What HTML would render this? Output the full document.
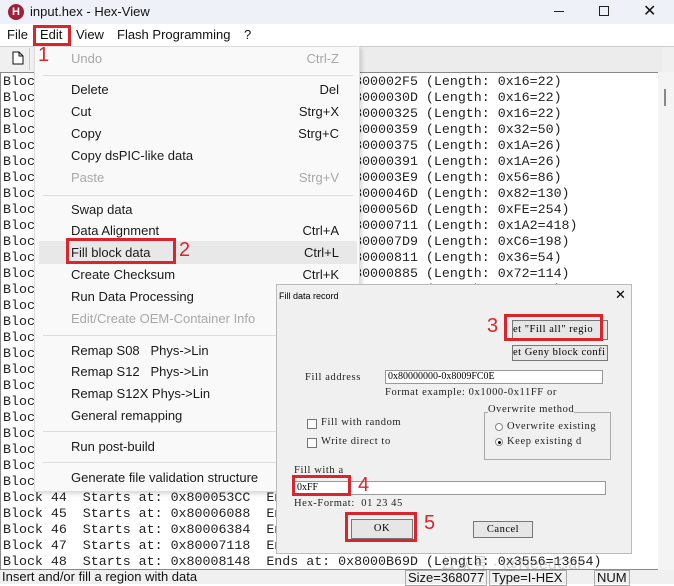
<!DOCTYPE html>
<html><head><meta charset="utf-8"><style>
*{margin:0;padding:0;box-sizing:border-box}
body{width:674px;height:584px;overflow:hidden;position:relative;background:#fff;font-family:"Liberation Sans","Noto Sans CJK SC",sans-serif;}
.abs{position:absolute}
.title{left:0;top:0;width:674px;height:24px;background:#eef2f8;font-size:13px;color:#111}
.menubar{left:0;top:24px;width:674px;height:22px;background:#fff;font-size:13px;color:#111}
.menubar span{position:absolute;top:3px}
.tool{left:0;top:46px;width:674px;height:26px;background:#f0f0f0;border-top:1px solid #ccc}
.txt{left:0;top:72px;width:660px;height:498px;background:#fff;border:1px solid #888;border-right:none;font-family:"Liberation Mono",monospace;font-size:13.3px;color:#222;white-space:pre;line-height:16px;padding-left:2px;padding-top:1px}
.sb{left:658px;top:72px;width:16px;height:498px;background:#f4f4f4}
.status{left:0;top:570px;width:674px;height:14px;background:#f0f0f0;font-size:13px;line-height:14px;color:#111}
.menu{left:34px;top:46px;width:326px;height:446px;background:#f9f9f9;border:1px solid #ddd;box-shadow:2px 2px 4px rgba(0,0,0,.15);font-size:13px;color:#1a1a1a}
.mi{position:absolute;left:36px;width:280px}
.mi b{font-weight:normal;position:absolute;right:12px}
.dis{color:#a8a8a8}
.sep{position:absolute;left:8px;width:310px;height:1px;background:#ddd}
.red{position:absolute;border:3px solid #d9262c}
.num{position:absolute;color:#d9262c;font-size:20px}
.dlg{left:276px;top:284px;width:356px;height:270px;background:#f0f0f0;border:1px solid #bbb}
.dlg .t{font-size:9px;position:absolute;left:2px;top:6px}
.dt{font-family:"Liberation Serif",serif;font-size:10.5px;letter-spacing:.6px;position:absolute;color:#222;white-space:pre}
.inp{position:absolute;background:#fff;border:1px solid #999;font-family:"Liberation Serif",serif;font-size:10px;padding-left:2px;line-height:12px}
.btn{position:absolute;background:#e6e6e6;border:1px solid #777;font-family:"Liberation Serif",serif;font-size:10.5px;letter-spacing:.5px;text-align:center;overflow:hidden;white-space:nowrap}
.cb{position:absolute;width:10px;height:10px;border:1px solid #777;background:#fff}
</style></head><body>
<div class="abs title">
 <div class="abs" style="left:8px;top:4px;width:16px;height:16px;border-radius:50%;background:#a0203a;color:#fff;font-size:11px;font-weight:bold;text-align:center;line-height:16px">H</div>
 <div class="abs" style="left:30px;top:4px">input.hex - Hex-View</div>
 <div class="abs" style="left:554px;top:11px;width:10px;height:1px;background:#222"></div>
 <div class="abs" style="left:599px;top:6px;width:10px;height:10px;border:1px solid #222"></div>
 <div class="abs" style="left:643px;top:1px;font-size:16px">✕</div>
</div>
<div class="abs menubar">
 <span style="left:7px">File</span><span style="left:40px">Edit</span><span style="left:76px">View</span><span style="left:117px">Flash Programming</span><span style="left:244px">?</span>
</div>
<div class="red" style="left:33px;top:25px;width:38px;height:21px"></div>
<div class="abs tool">
 <div class="abs" style="left:4px;top:1px;width:26px;height:22px;border-right:1px solid #ccc"></div>
 <svg class="abs" style="left:12px;top:4px" width="12" height="14"><path d="M1 1H7L11 5V13H1Z M7 1V5H11" fill="#fff" stroke="#111"/></svg>
 <div class="abs" style="left:360px;top:0;width:302px;height:25px;background:#ececec"></div>
</div>
<div class="abs txt">Block  1  Starts at: 0x800002DF  Ends at: 0x800002F5 (Length: 0x16=22)
Block  2  Starts at: 0x800002F7  Ends at: 0x8000030D (Length: 0x16=22)
Block  3  Starts at: 0x8000030F  Ends at: 0x80000325 (Length: 0x16=22)
Block  4  Starts at: 0x80000327  Ends at: 0x80000359 (Length: 0x32=50)
Block  5  Starts at: 0x8000035B  Ends at: 0x80000375 (Length: 0x1A=26)
Block  6  Starts at: 0x80000377  Ends at: 0x80000391 (Length: 0x1A=26)
Block  7  Starts at: 0x80000393  Ends at: 0x800003E9 (Length: 0x56=86)
Block  8  Starts at: 0x800003EB  Ends at: 0x8000046D (Length: 0x82=130)
Block  9  Starts at: 0x8000046F  Ends at: 0x8000056D (Length: 0xFE=254)
Block 10  Starts at: 0x8000056F  Ends at: 0x80000711 (Length: 0x1A2=418)
Block 11  Starts at: 0x80000713  Ends at: 0x800007D9 (Length: 0xC6=198)
Block 12  Starts at: 0x800007DB  Ends at: 0x80000811 (Length: 0x36=54)
Block 13  Starts at: 0x80000813  Ends at: 0x80000885 (Length: 0x72=114)
Block 14  Starts at: 0x80000887  Ends at: 0x800008D1 (Length: 0x4A=74)
Block 15
Block 16
Block 17
Block 18
Block 19
Block 20
Block 21
Block 22
Block 23
Block 24
Block 25
Block 43
Block 44  Starts at: 0x800053CC  Ends at: 0x80005E88
Block 45  Starts at: 0x80006088  Ends at: 0x80006380
Block 46  Starts at: 0x80006384  Ends at: 0x80007110
Block 47  Starts at: 0x80007118  Ends at: 0x80008140
Block 48  Starts at: 0x80008148  Ends at: 0x8000B69D (Length: 0x3556=13654)</div>
<div class="abs sb"><div class="abs" style="left:6px;top:17px;width:2px;height:17px;background:#888"></div></div>
<div class="abs status">
 <span class="abs" style="left:2px;top:0">Insert and/or fill a region with data</span>
 <span class="abs" style="left:405px;top:0;border:1px solid #aaa;padding:0 2px">Size=368077</span>
 <span class="abs" style="left:489px;top:0;border:1px solid #aaa;padding:0 2px;width:78px">Type=I-HEX</span>
 <span class="abs" style="left:594px;top:0;border:1px solid #aaa;padding:0 2px">NUM</span>
</div>
<div class="abs menu">
 <div class="mi dis" style="top:4px">Undo<b>Ctrl-Z</b></div>
 <div class="sep" style="top:28px"></div>
 <div class="mi" style="top:35px">Delete<b>Del</b></div>
 <div class="mi" style="top:57px">Cut<b>Strg+X</b></div>
 <div class="mi" style="top:79px">Copy<b>Strg+C</b></div>
 <div class="mi" style="top:101px">Copy dsPIC-like data</div>
 <div class="mi dis" style="top:123px">Paste<b>Strg+V</b></div>
 <div class="sep" style="top:148px"></div>
 <div class="mi" style="top:155px">Swap data</div>
 <div class="mi" style="top:176px">Data Alignment<b>Ctrl+A</b></div>
 <div class="abs" style="left:4px;top:194px;width:318px;height:23px;background:#e8e8e8"></div>
 <div class="mi" style="top:198px">Fill block data<b>Ctrl+L</b></div>
 <div class="mi" style="top:220px">Create Checksum<b>Ctrl+K</b></div>
 <div class="mi" style="top:242px">Run Data Processing</div>
 <div class="mi dis" style="top:264px">Edit/Create OEM-Container Info</div>
 <div class="sep" style="top:288px"></div>
 <div class="mi" style="top:296px">Remap S08&nbsp;&nbsp;&nbsp;Phys-&gt;Lin</div>
 <div class="mi" style="top:317px">Remap S12&nbsp;&nbsp;&nbsp;Phys-&gt;Lin</div>
 <div class="mi" style="top:339px">Remap S12X Phys-&gt;Lin</div>
 <div class="mi" style="top:361px">General remapping</div>
 <div class="sep" style="top:384px"></div>
 <div class="mi" style="top:392px">Run post-build</div>
 <div class="sep" style="top:415px"></div>
 <div class="mi" style="top:423px">Generate file validation structure</div>
</div>
<div class="num" style="left:38px;top:44px">1</div>
<div class="red" style="left:66px;top:238px;width:110px;height:26px"></div>
<div class="num" style="left:179px;top:239px">2</div>
<div class="abs dlg">
 <div class="t">Fill data record</div>
 <div class="abs" style="left:338px;top:2px;font-size:13px">✕</div>
 <div class="btn" style="left:235px;top:35px;width:96px;height:20px;line-height:18px;text-align:left">et "Fill all" regio</div>
 <div class="btn" style="left:235px;top:60px;width:96px;height:16px;line-height:14px;text-align:left">et Geny block confi</div>
 <div class="dt" style="left:28px;top:87px">Fill address</div>
 <div class="inp" style="left:108px;top:85px;width:218px;height:14px">0x80000000-0x8009FC0E</div>
 <div class="dt" style="left:108px;top:102px">Format example: 0x1000-0x11FF or</div>
 <div class="abs" style="left:207px;top:127px;width:127px;height:48px;border:1px solid #aaa"></div>
 <div class="dt" style="left:211px;top:119px;background:#f0f0f0">Overwrite method</div>
 <div class="abs" style="left:218px;top:138px;width:8px;height:8px;border-radius:50%;border:1px solid #888;background:#fff"></div>
 <div class="dt" style="left:230px;top:136px">Overwrite existing</div>
 <div class="abs" style="left:218px;top:153px;width:8px;height:8px;border-radius:50%;border:1px solid #888;background:#fff"><div style="margin:2px;width:3px;height:3px;border-radius:50%;background:#000"></div></div>
 <div class="dt" style="left:230px;top:151px">Keep existing d</div>
 <div class="cb" style="left:30px;top:134px"></div><div class="dt" style="left:44px;top:132px">Fill with random</div>
 <div class="cb" style="left:30px;top:153px"></div><div class="dt" style="left:44px;top:151px">Write direct to</div>
 <div class="dt" style="left:17px;top:180px">Fill with a</div>
 <div class="inp" style="left:17px;top:196px;width:312px;height:14px">0xFF</div>
 <div class="dt" style="left:17px;top:213px">Hex-Format:&nbsp;&nbsp;01 23 45</div>
 <div class="btn" style="left:74px;top:234px;width:62px;height:20px;line-height:18px">OK</div>
 <div class="btn" style="left:196px;top:236px;width:60px;height:17px;line-height:15px">Cancel</div>
</div>
<div class="red" style="left:504px;top:314px;width:99px;height:27px"></div>
<div class="num" style="left:487px;top:315px">3</div>
<div class="red" style="left:292px;top:475px;width:59px;height:21px"></div>
<div class="num" style="left:358px;top:474px">4</div>
<div class="red" style="left:345px;top:512px;width:72px;height:30px"></div>
<div class="num" style="left:424px;top:512px">5</div>
<div class="abs" style="left:440px;top:550px;color:rgba(120,120,120,.35);font-size:16px;white-space:nowrap">公众号 · @NeedCar</div>
</body></html>
